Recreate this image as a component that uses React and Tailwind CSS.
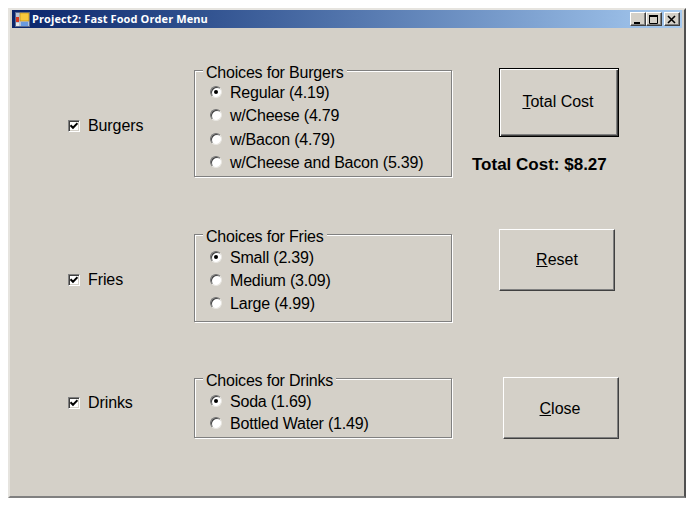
import React from 'react';

const sans = "font-['Liberation_Sans',Arial,sans-serif]";

function TitleButton({ children }) {
  return (
    <div className="w-[16px] h-[14px] flex items-center justify-center bg-[#d4d0c8] border border-t-white border-l-white border-r-[#404040] border-b-[#404040] shadow-[inset_-1px_-1px_0_#808080]">
      <svg width="10" height="9" viewBox="0 0 10 9">{children}</svg>
    </div>
  );
}

function CheckBox({ label, className }) {
  return (
    <div className={`flex items-center ${className}`}>
      <div className="w-[12px] h-[12px] bg-white border border-t-[#808080] border-l-[#808080] border-r-white border-b-white shadow-[inset_1px_1px_0_#404040,inset_-1px_-1px_0_#d4d0c8] flex items-center justify-center">
        <svg width="8" height="8" viewBox="0 0 8 8">
          <path d="M0.5 3.3 L3 5.8 L7.5 1.2" fill="none" stroke="#000" strokeWidth="2" />
        </svg>
      </div>
      <span className="ml-[8px] text-[16px] leading-[18px] tracking-[-0.1px] text-black">{label}</span>
    </div>
  );
}

function Radio({ label, checked, rowClass }) {
  return (
    <div className={`flex items-center ${rowClass}`}>
      <div className="w-[12px] h-[12px] ml-[15px] -mt-[2px] rounded-full bg-white border border-t-[#707070] border-l-[#707070] border-r-[#e8e6e1] border-b-[#e8e6e1] shadow-[inset_1px_1px_0_#404040] flex items-center justify-center">
        {checked && <div className="w-[4px] h-[4px] rounded-full bg-black" />}
      </div>
      <span className="ml-[8px] text-[16px] leading-[18px] tracking-[-0.2px] text-black">{label}</span>
    </div>
  );
}

function GroupBox({ title, className, children }) {
  return (
    <div className={`relative w-[258px] border border-[#808080] shadow-[1px_1px_0_#fff,inset_1px_1px_0_#fff] ${className}`}>
      <span className="absolute -top-[7px] left-[8px] px-[3px] bg-[#d4d0c8] text-[16px] leading-[18px] tracking-[-0.2px] text-black">{title}</span>
      {children}
    </div>
  );
}

function PushButton({ className, children }) {
  return (
    <button className={`flex items-center justify-center bg-[#d4d0c8] text-[16px] leading-[18px] text-black ${className}`}>
      {children}
    </button>
  );
}

const raised = 'border border-t-white border-l-white border-r-[#404040] border-b-[#404040] shadow-[inset_-1px_-1px_0_#808080]';

export default function App() {
  return (
    <div className={`w-[698px] h-[522px] bg-white pt-[8px] pl-[8px] ${sans}`}>
      <div className="w-[678px] h-[490px] bg-[#d4d0c8] border-2 border-t-[#e6e4df] border-l-[#e6e4df] border-r-[#505050] border-b-[#808080] px-[2px]">
        {/* Title bar */}
        <div className="w-[670px] h-[18px] flex items-center bg-gradient-to-r from-[#0a246a] to-[#a6caf0] pl-[3px] pr-[2px]">
          <svg width="15" height="15" viewBox="0 0 15 15">
            <rect x="0" y="0" width="15" height="15" fill="#b8c4d8" />
            <rect x="0.5" y="0.5" width="14" height="14" fill="none" stroke="#5a6a90" />
            <rect x="5" y="1" width="9" height="8" fill="#f8c83c" stroke="#b08010" strokeWidth="0.6" />
            <rect x="1" y="5" width="3" height="5" fill="#d83820" />
            <rect x="6" y="10" width="7" height="4" fill="#6a9ae0" />
            <rect x="1" y="11" width="3" height="3" fill="#e8e8e8" />
          </svg>
          <span className="ml-[2px] text-[11px] leading-[18px] tracking-[0.1px] font-bold text-white font-['Open_Sans',sans-serif]">Project2: Fast Food Order Menu</span>
          <div className="ml-auto flex">
            <TitleButton><rect x="1" y="7" width="6" height="2" fill="#000" /></TitleButton>
            <TitleButton>
              <path d="M0.5 1.5 H8.5 V8.5 H0.5 Z" fill="none" stroke="#000" />
              <rect x="0" y="0" width="9" height="2" fill="#000" />
            </TitleButton>
            <div className="ml-[2px]">
              <TitleButton><path d="M1 1 L8 8 M8 1 L1 8" stroke="#000" strokeWidth="1.6" fill="none" /></TitleButton>
            </div>
          </div>
        </div>

        {/* Burgers */}
        <div className="flex items-start mt-[42px]">
          <CheckBox label="Burgers" className="w-[182px] pl-[56px] mt-[47px]" />
          <GroupBox title="Choices for Burgers" className="h-[107px] pt-[10px]">
            <Radio label="Regular (4.19)" checked rowClass="h-[23px]" />
            <Radio label="w/Cheese (4.79" rowClass="h-[24px]" />
            <Radio label="w/Bacon (4.79)" rowClass="h-[23px]" />
            <Radio label="w/Cheese and Bacon (5.39)" rowClass="h-[23px]" />
          </GroupBox>
          <div className="-mt-[2px]">
            <PushButton className="ml-[47px] w-[120px] h-[69px] pb-[2px] pr-[2px] border border-black shadow-[inset_1px_1px_0_#fff,inset_-1px_-1px_0_#404040,inset_-2px_-2px_0_#808080]">
              <span><span className="underline">T</span>otal Cost</span>
            </PushButton>
            <div className="ml-[20px] mt-[19px] text-[17px] leading-[18px] font-bold text-black">Total Cost: $8.27</div>
          </div>
        </div>

        {/* Fries */}
        <div className="flex items-start mt-[57px]">
          <CheckBox label="Fries" className="w-[182px] pl-[56px] mt-[37px]" />
          <GroupBox title="Choices for Fries" className="h-[88px] pt-[11px]">
            <Radio label="Small (2.39)" checked rowClass="h-[23px]" />
            <Radio label="Medium (3.09)" rowClass="h-[23px]" />
            <Radio label="Large (4.99)" rowClass="h-[23px]" />
          </GroupBox>
          <PushButton className={`ml-[47px] -mt-[5px] w-[116px] h-[62px] ${raised}`}>
            <span><span className="underline">R</span>eset</span>
          </PushButton>
        </div>

        {/* Drinks */}
        <div className="flex items-start mt-[56px]">
          <CheckBox label="Drinks" className="w-[182px] pl-[56px] mt-[16px]" />
          <GroupBox title="Choices for Drinks" className="h-[60px] pt-[11px]">
            <Radio label="Soda (1.69)" checked rowClass="h-[23px]" />
            <Radio label="Bottled Water (1.49)" rowClass="h-[22px]" />
          </GroupBox>
          <PushButton className={`ml-[51px] -mt-[1px] w-[116px] h-[62px] pt-[2px] pr-[2px] ${raised}`}>
            <span><span className="underline">C</span>lose</span>
          </PushButton>
        </div>
      </div>
    </div>
  );
}
